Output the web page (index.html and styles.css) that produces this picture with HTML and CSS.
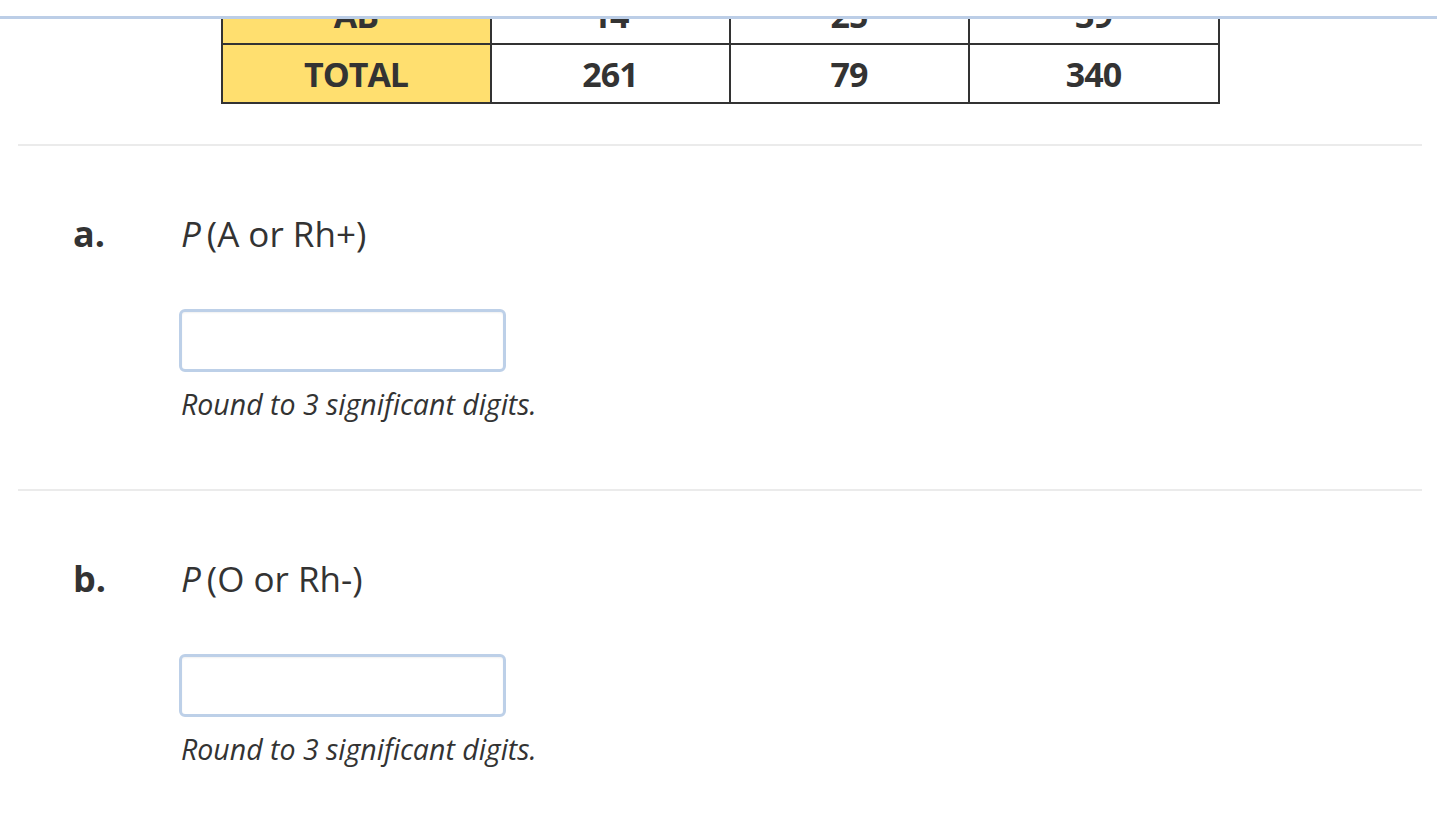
FILE: index.html
```html
<!DOCTYPE html>
<html lang="en">
<head>
<meta charset="utf-8">
<title>Probability question</title>
<link rel="stylesheet" href="styles.css">
</head>
<body>
<header class="topbar"></header>
<main class="page">
  <div class="table-wrap">
    <table class="data-table">
      <tr>
        <th class="row-head">AB</th>
        <td>14</td>
        <td>25</td>
        <td>39</td>
      </tr>
      <tr>
        <th class="row-head">TOTAL</th>
        <td>261</td>
        <td>79</td>
        <td>340</td>
      </tr>
    </table>
  </div>

  <section class="part">
    <div class="part-label">a.</div>
    <div class="part-body">
      <div class="prompt"><i class="var">P</i>(A or Rh+)</div>
      <input class="answer" type="text" aria-label="Answer a">
      <div class="hint">Round to 3 significant digits.</div>
    </div>
  </section>

  <section class="part">
    <div class="part-label">b.</div>
    <div class="part-body">
      <div class="prompt"><i class="var">P</i>(O or Rh-)</div>
      <input class="answer" type="text" aria-label="Answer b">
      <div class="hint">Round to 3 significant digits.</div>
    </div>
  </section>
</main>
</body>
</html>
```

FILE: styles.css
```css
html, body {
  margin: 0;
  padding: 0;
  background: #ffffff;
}

body {
  font-family: "Open Sans", "Noto Sans", "DejaVu Sans", sans-serif;
  color: #333333;
}

.topbar {
  position: fixed;
  top: 0;
  left: 0;
  right: 0;
  height: 16px;
  background: #ffffff;
  border-bottom: 3px solid #bccee7;
  z-index: 10;
}

.page {
  padding: 0 15px 0 18px;
}

.table-wrap {
  display: flex;
  justify-content: center;
  margin-top: -16px;
  padding-bottom: 40px;
}

.data-table {
  border-collapse: collapse;
  width: 999px;
  font-family: "Open Sans", "Noto Sans", sans-serif;
  font-weight: 700;
  font-size: 34px;
  letter-spacing: -1px;
  color: #333333;
}

.data-table th,
.data-table td {
  border: 2px solid #333333;
  height: 57px;
  padding: 0;
  text-align: center;
  vertical-align: middle;
}

.data-table .row-head {
  width: 267px;
  background: #ffdf6f;
}

.data-table td:nth-child(2),
.data-table td:nth-child(3) {
  width: 237px;
}

.part {
  display: flex;
  border-top: 2px solid #ebebeb;
  padding: 65px 0 66px 55px;
}

.part-label {
  width: 108px;
  font-weight: 700;
  font-size: 36px;
  line-height: 46px;
}

.part-body {
  display: flex;
  flex-direction: column;
  align-items: flex-start;
}

.prompt {
  font-size: 35px;
  line-height: 46px;
}

.var {
  font-style: italic;
  margin-right: 6px;
}

.answer {
  margin-top: 52px;
  margin-left: -2px;
  width: 327px;
  height: 63px;
  box-sizing: border-box;
  border: 3px solid #bdd0e8;
  border-radius: 6px;
  background: #ffffff;
  box-shadow: inset 0 1px 2px rgba(0, 0, 0, 0.06);
  outline: none;
  padding: 0 10px;
  font-size: 26px;
}

.hint {
  margin-top: 13px;
  font-style: italic;
  font-size: 28.5px;
  line-height: 38px;
  color: #333333;
}
```
